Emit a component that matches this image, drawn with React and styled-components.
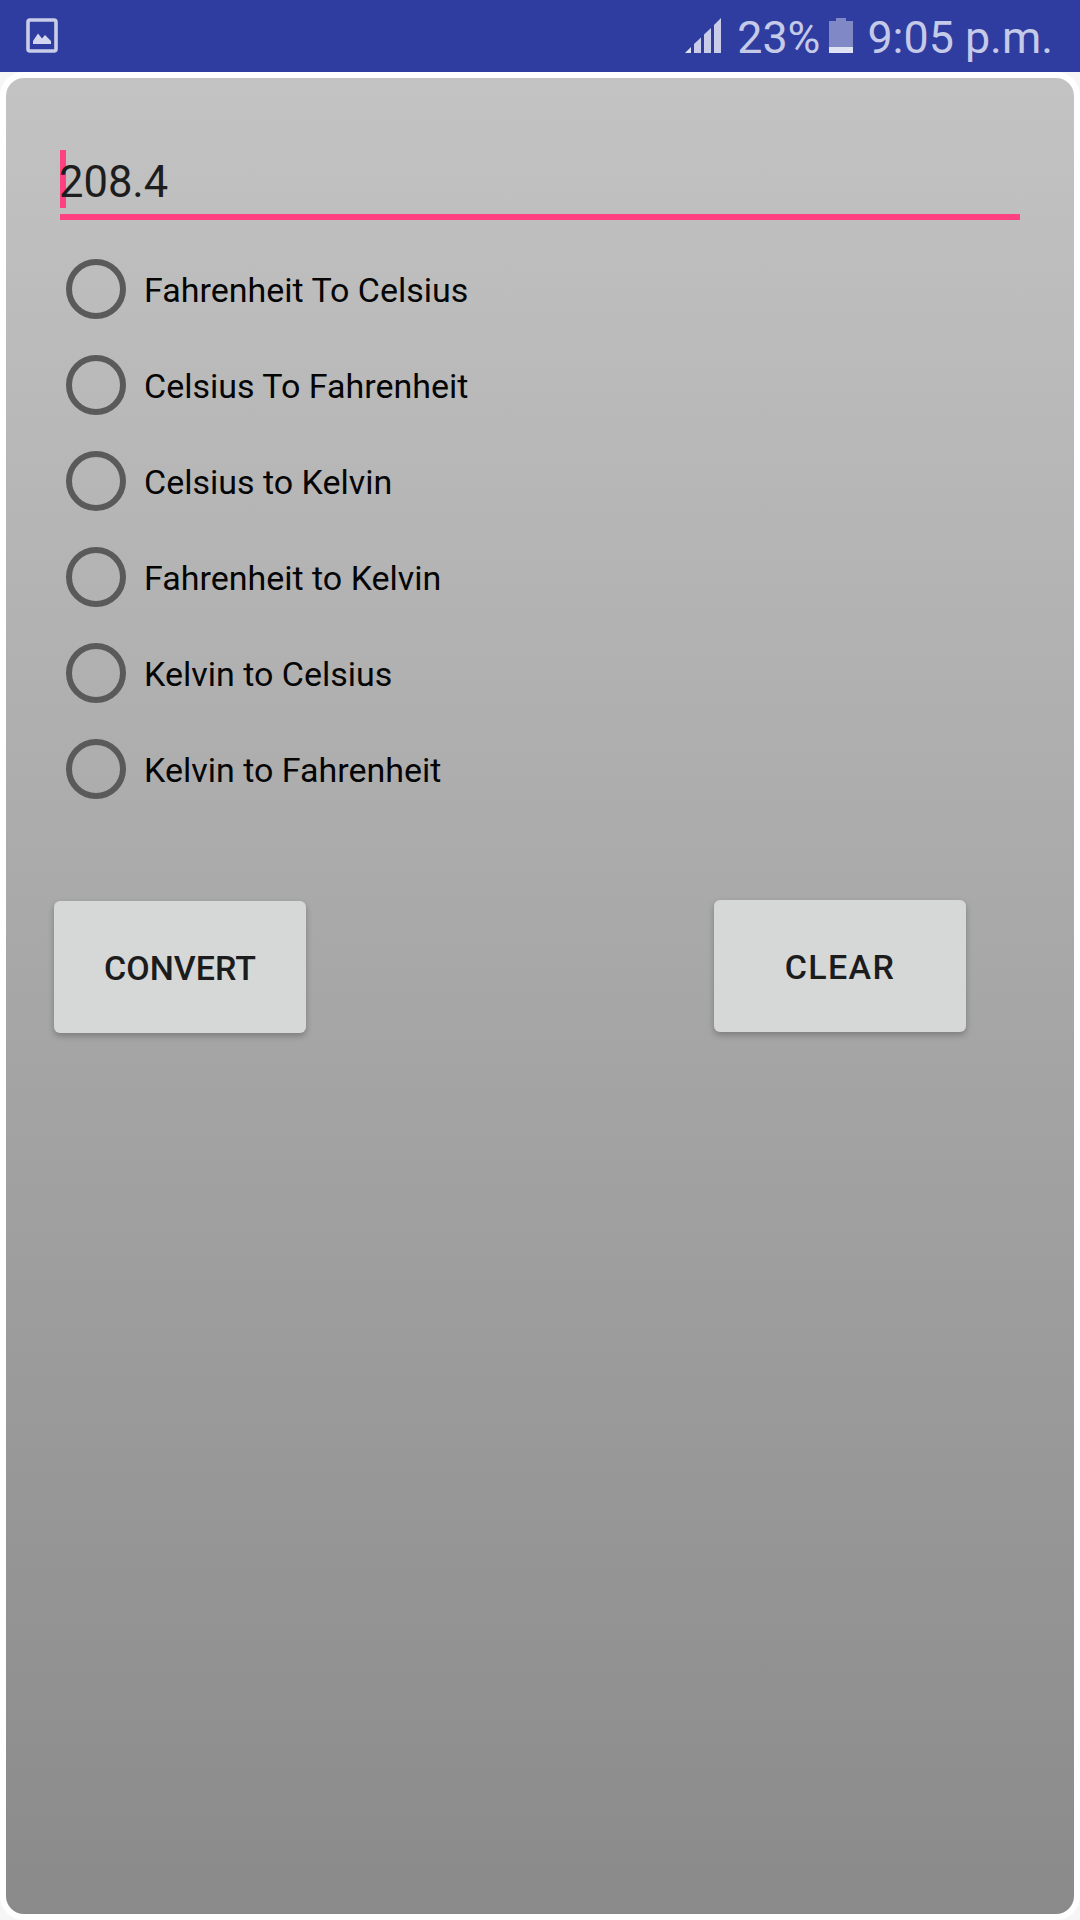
import React from "react";
import styled, { createGlobalStyle } from "styled-components";

const options = [
	"Fahrenheit To Celsius",
	"Celsius To Fahrenheit",
	"Celsius to Kelvin",
	"Fahrenheit to Kelvin",
	"Kelvin to Celsius",
	"Kelvin to Fahrenheit",
];

const App = () => {
	return (
		<Page>
			<GlobalStyle />
			<StatusBar>
				<GalleryIcon viewBox="0 0 32 35">
					<rect x="2" y="2" width="28" height="31" rx="2" fill="none" stroke="#c9cde9" strokeWidth="3.6" />
					<path d="M7 26 L7 23 L12 15.5 L16 20.5 L19 17 L25 23 L25 26 Z" fill="#d3d6ee" />
				</GalleryIcon>
				<StatusRight>
					<SignalIcon viewBox="0 0 36 35">
						<path d="M0 35 L6 29 L6 35 Z" fill="#dde0f2" />
						<path d="M9 26 L16 19.5 L16 35 L9 35 Z" fill="#c9cde9" />
						<path d="M19 16.5 L26 10 L26 35 L19 35 Z" fill="#c9cde9" />
						<path d="M29 7 L36 0 L36 35 L29 35 Z" fill="#c9cde9" />
					</SignalIcon>
					<Percent>23%</Percent>
					<BatteryIcon viewBox="0 0 24 35">
						<path d="M7 0 H17 V3 H24 V29 H0 V3 H7 Z" fill="#8088c6" />
						<rect x="0" y="29" width="24" height="6" fill="#dfe2f3" />
					</BatteryIcon>
					<Clock>9:05 p.m.</Clock>
				</StatusRight>
			</StatusBar>
			<Frame>
				<Card>
					<Field>
						<Caret />
						<FieldValue>208.4</FieldValue>
					</Field>
					<RadioList>
						{options.map((label) => (
							<RadioRow key={label}>
								<RadioCircle />
								<RadioLabel>{label}</RadioLabel>
							</RadioRow>
						))}
					</RadioList>
					<ButtonRow>
						<ActionButton $offset={1}>CONVERT</ActionButton>
						<ActionButton $spacing={1.4}>CLEAR</ActionButton>
					</ButtonRow>
				</Card>
			</Frame>
		</Page>
	);
};

export default App;

/* ========== STYLES ========== */
const GlobalStyle = createGlobalStyle`
	html, body {
		margin: 0;
		padding: 0;
		background: #f6f6f6;
	}
	* {
		box-sizing: border-box;
	}
`;

const Page = styled.div`
	width: 1080px;
	height: 1920px;
	overflow: hidden;
	display: flex;
	flex-direction: column;
	font-family: Roboto, "Liberation Sans", sans-serif;
	background: #f6f6f6;
`;

const StatusBar = styled.div`
	height: 72px;
	flex: none;
	display: flex;
	align-items: flex-start;
	justify-content: space-between;
	padding: 18px 27px 0 26px;
	background: #2e3d9f;
`;

const GalleryIcon = styled.svg`
	width: 32px;
	height: 35px;
`;

const StatusRight = styled.div`
	display: flex;
	align-items: flex-start;
	color: #c5cae9;
	font-size: 44.8px;
	line-height: 39px;
`;

const SignalIcon = styled.svg`
	width: 36px;
	height: 35px;
`;

const Percent = styled.span`
	margin-left: 16px;
	height: 35px;
`;

const BatteryIcon = styled.svg`
	width: 24px;
	height: 35px;
	margin-left: 9px;
`;

const Clock = styled.span`
	margin-left: 14px;
	height: 35px;
`;

const Frame = styled.div`
	flex: 1;
	padding: 6px;
	background: #fff;
	border-radius: 24px;
`;

const Card = styled.div`
	height: 100%;
	padding: 72px 54px 0 54px;
	border-radius: 18px;
	background: linear-gradient(180deg, #c3c3c3 0%, #8a8a8a 100%);
`;

const Field = styled.div`
	position: relative;
	height: 70px;
	border-bottom: 6px solid #ff4081;
`;

const FieldValue = styled.span`
	position: relative;
	display: block;
	margin-left: -1px;
	line-height: 65px;
	font-size: 43.5px;
	color: #1d1d1d;
`;

const Caret = styled.span`
	position: absolute;
	left: 0;
	top: 0;
	width: 6px;
	height: 58px;
	background: #ff4081;
`;

const RadioList = styled.div`
	margin-top: 21px;
	display: flex;
	flex-direction: column;
`;

const RadioRow = styled.div`
	height: 96px;
	display: flex;
	align-items: center;
	padding-left: 6px;
`;

const RadioCircle = styled.span`
	width: 60px;
	height: 60px;
	border: 6.5px solid #5a5a5a;
	border-radius: 50%;
`;

const RadioLabel = styled.span`
	margin-left: 18px;
	padding-top: 2px;
	font-size: 34px;
	color: #050505;
`;

const ButtonRow = styled.div`
	margin-top: 83px;
	margin-left: -6px;
	display: flex;
	align-items: flex-start;
	gap: 408px;
`;

const ActionButton = styled.button`
	width: 252px;
	height: 132px;
	margin-top: ${({ $offset }) => $offset || 0}px;
	padding: 2px 0 0;
	border: none;
	border-radius: 6px;
	background: #d6d8d8;
	color: #1c1c1c;
	font-family: inherit;
	font-size: 34px;
	font-weight: 500;
	letter-spacing: ${({ $spacing }) => $spacing || 0}px;
	box-shadow: 0 3px 6px rgba(0, 0, 0, 0.25);
`;
